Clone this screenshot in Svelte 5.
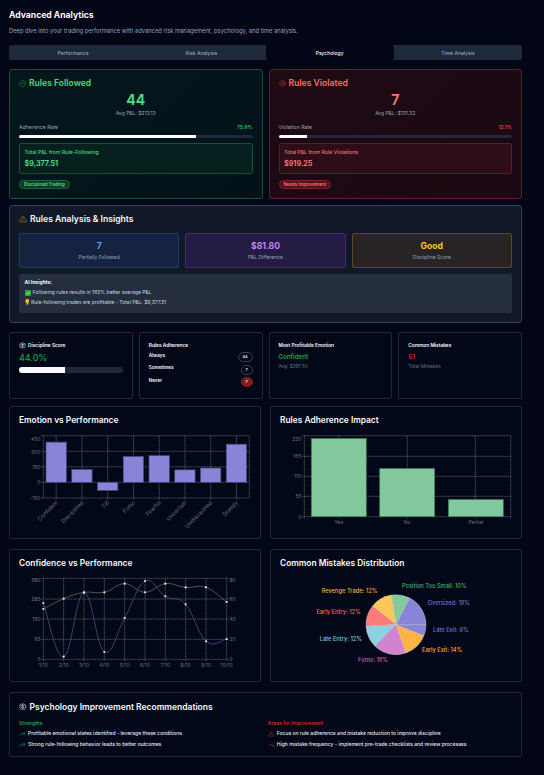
<script>
  const bars1 = [388, 125, -78, 250, 258, 120, 138, 368];
  const names1 = ['Confident','Disciplined','Tilt','Fomo','Fearful','Uncertain','Undisciplined','Greedy'];
  const x0 = 43.3, x1 = 249.3, y450 = 435.7, y0 = 482.3;
  const step1 = (x1 - x0) / 8;
  const scale1 = (y0 - y450) / 450;
  const gy1 = [435.7, 451.3, 466.8, 482.3, 498];

  const gridY2 = [435.7, 456.3, 476.3, 496.3, 516.7];
  const labels2 = ['220', '165', '110', '55', '0'];
  const bars2 = [
    { name: 'Yes', x: 311.3, y: 438.5 },
    { name: 'No', x: 379.7, y: 468.5 },
    { name: 'Partial', x: 448.3, y: 499.5 }
  ];

  const toPts = (arr) => arr.map(([x, y]) => [x / 3, 545 + y / 3]);
  const purple = toPts([[130,174],[191,335],[252,143],[313,321],[374,219],[435,108],[496,154],[557,178],[618,289],[680,282]]);
  const green = toPts([[130,192],[191,161],[252,142],[313,142],[374,116],[435,142],[496,116],[557,127],[618,127],[680,171]]);
  function smooth(p, t = 0.4) {
    let d = `M${p[0][0]} ${p[0][1]}`;
    for (let i = 0; i < p.length - 1; i++) {
      const a = p[i - 1] || p[i], b = p[i], c = p[i + 1], e = p[i + 2] || c;
      const c1 = [b[0] + (c[0] - a[0]) * t / 2, b[1] + (c[1] - a[1]) * t / 2];
      const c2 = [c[0] - (e[0] - b[0]) * t / 2, c[1] - (e[1] - b[1]) * t / 2];
      d += `C${c1[0]} ${c1[1]} ${c2[0]} ${c2[1]} ${c[0]} ${c[1]}`;
    }
    return d;
  }
  const gx3 = [130,191,252,313,374,435,496,557,618,680].map(v => v / 3);
  const gy3 = [100,162,222,283,343].map(v => 545 + v / 3);
  const dates = ['1/10','2/10','3/10','4/10','5/10','6/10','7/10','8/10','9/10','10/10'];

  const pieData = [
    { v: 9, c: '#8884d8' }, { v: 5, c: '#82ca9d' }, { v: 6, c: '#ffc658' }, { v: 6, c: '#ff7c7c' },
    { v: 6, c: '#8dd1e1' }, { v: 9, c: '#d084d0' }, { v: 7, c: '#ffb347' }, { v: 3, c: '#8884d8' }
  ];
  const cx = 396, cy = 624.7, r = 30;
  let acc = 0;
  const slices = pieData.map((s) => {
    const a0 = acc / 51 * Math.PI * 2; acc += s.v;
    const a1 = acc / 51 * Math.PI * 2;
    const large = a1 - a0 > Math.PI ? 1 : 0;
    return { c: s.c, d: `M${cx} ${cy}L${cx + r * Math.cos(a0)} ${cy - r * Math.sin(a0)}A${r} ${r} 0 ${large} 0 ${cx + r * Math.cos(a1)} ${cy - r * Math.sin(a1)}Z` };
  });
  const pieLabels = [
    { t: 'Position Too Small: 10%', x: 402, y: 587.5, c: '#4caf73', a: 'start' },
    { t: 'Oversized: 18%', x: 427.7, y: 604.5, c: '#7370d0', a: 'start' },
    { t: 'Late Exit: 6%', x: 433, y: 631.5, c: '#7370d0', a: 'start' },
    { t: 'Early Exit: 14%', x: 422, y: 651.5, c: '#ffa62e', a: 'start' },
    { t: 'Fomo: 18%', x: 388, y: 661.5, c: '#c065c0', a: 'end' },
    { t: 'Late Entry: 12%', x: 362, y: 641, c: '#7cc8da', a: 'end' },
    { t: 'Early Entry: 12%', x: 360.7, y: 613.5, c: '#ff6060', a: 'end' },
    { t: 'Revenge Trade: 12%', x: 377.3, y: 592.5, c: '#f5a93c', a: 'end' }
  ];
</script>

{#snippet brain()}
  <svg class="ic" viewBox="0 0 24 24" fill="none" stroke="currentColor" stroke-width="3" stroke-linecap="round" stroke-linejoin="round">
    <path d="M12 5a3 3 0 0 0-5.9-.1A4 4 0 0 0 3.6 11a4 4 0 0 0 .6 6.5A4 4 0 0 0 12 18Z" />
    <path d="M12 5a3 3 0 0 1 5.9-.1 4 4 0 0 1 2.5 6.1 4 4 0 0 1-.6 6.5A4 4 0 0 1 12 18Z" />
    <path d="M8 9h1M15 9h1M8 14h1M15 14h1" />
  </svg>
{/snippet}
{#snippet trendUp()}
  <svg class="ic li" viewBox="0 0 24 24" fill="none" stroke="currentColor" stroke-width="2.4" stroke-linecap="round" stroke-linejoin="round">
    <path d="M22 7l-8.5 8.5-5-5L2 17" /><path d="M16 7h6v6" />
  </svg>
{/snippet}
{#snippet trendDown()}
  <svg class="ic li" viewBox="0 0 24 24" fill="none" stroke="currentColor" stroke-width="2.4" stroke-linecap="round" stroke-linejoin="round">
    <path d="M22 17l-8.5-8.5-5 5L2 7" /><path d="M16 17h6v-6" />
  </svg>
{/snippet}
{#snippet alert(cls)}
  <svg class="ic {cls}" viewBox="0 0 24 24" fill="none" stroke="currentColor" stroke-width="2" stroke-linecap="round" stroke-linejoin="round">
    <path d="M21.7 18l-8-14a2 2 0 0 0-3.5 0l-8 14A2 2 0 0 0 4 21h16a2 2 0 0 0 1.7-3Z" /><path d="M12 9v4M12 17h.01" />
  </svg>
{/snippet}

<main class="page">
  <header class="head">
    <h1>Advanced Analytics</h1>
    <p>Deep dive into your trading performance with advanced risk management, psychology, and time analysis.</p>
  </header>

  <nav class="tabs">
    <span>Performance</span><span>Risk Analysis</span><span class="active">Psychology</span><span>Time Analysis</span>
  </nav>

  <section class="two">
    <article class="rule good">
      <h2>
        <svg class="ic t" viewBox="0 0 24 24" fill="none" stroke="currentColor" stroke-width="2" stroke-linecap="round" stroke-linejoin="round"><path d="M21.8 10A10 10 0 1 1 17 3.3" /><path d="M9 11l3 3L22 4" /></svg>
        Rules Followed
      </h2>
      <div class="big">44</div>
      <div class="avg">Avg P&amp;L: $213.13</div>
      <div class="rate"><span>Adherence Rate</span><b>75.9%</b></div>
      <div class="bar"><i style="width:75.9%"></i></div>
      <div class="sub">
        <div class="sl">Total P&amp;L from Rule-Following</div>
        <div class="sv">$9,377.51</div>
      </div>
      <span class="badge">Disciplined Trading</span>
    </article>
    <article class="rule bad">
      <h2>
        <svg class="ic t" viewBox="0 0 24 24" fill="none" stroke="currentColor" stroke-width="2" stroke-linecap="round"><circle cx="12" cy="12" r="10" /><circle cx="12" cy="12" r="3.6" /></svg>
        Rules Violated
      </h2>
      <div class="big">7</div>
      <div class="avg">Avg P&amp;L: $131.32</div>
      <div class="rate"><span>Violation Rate</span><b>12.1%</b></div>
      <div class="bar"><i style="width:12.1%"></i></div>
      <div class="sub">
        <div class="sl">Total P&amp;L from Rule Violations</div>
        <div class="sv">$919.25</div>
      </div>
      <span class="badge">Needs Improvement</span>
    </article>
  </section>

  <section class="insight">
    <h2>{@render alert('warn')} Rules Analysis &amp; Insights</h2>
    <div class="three">
      <div class="tile blue"><b>7</b><span>Partially Followed</span></div>
      <div class="tile purple"><b>$81.80</b><span>P&amp;L Difference</span></div>
      <div class="tile amber"><b>Good</b><span>Discipline Score</span></div>
    </div>
    <div class="ai">
      <h3>AI Insights:</h3>
      <p>
        <svg class="emoji" viewBox="0 0 12 12"><rect width="12" height="12" rx="1.5" fill="#22a83a" /><path d="M3 6.2l2.2 2.3L9 3.8" fill="none" stroke="#fff" stroke-width="1.6" /></svg>
        Following rules results in 162% better average P&amp;L
      </p>
      <p>
        <svg class="emoji bulb" viewBox="0 0 9 12"><circle cx="4.5" cy="4" r="4" fill="#fcc21b" /><rect x="2.7" y="7.5" width="3.6" height="4" rx=".8" fill="#b0a58a" /></svg>
        Rule-following trades are profitable - Total P&amp;L: $9,377.51
      </p>
    </div>
  </section>

  <section class="stats">
    <article class="stat">
      <h4><span class="brain">{@render brain()}</span>Discipline Score</h4>
      <div class="score">44.0%</div>
      <div class="sbar"><i style="width:44%"></i></div>
    </article>
    <article class="stat">
      <h4>Rules Adherence</h4>
      <div class="adh first"><span>Always</span><em class="wide">44</em></div>
      <div class="adh"><span>Sometimes</span><em>7</em></div>
      <div class="adh"><span>Never</span><em class="red">7</em></div>
    </article>
    <article class="stat">
      <h4>Most Profitable Emotion</h4>
      <div class="val gr">Confident</div>
      <div class="note">Avg: $391.50</div>
    </article>
    <article class="stat">
      <h4>Common Mistakes</h4>
      <div class="val rd">51</div>
      <div class="note">Total Mistakes</div>
    </article>
  </section>

  <section class="charts">
    <article class="chart">
      <h3>Emotion vs Performance</h3>
      <svg viewBox="10 428 250 105">
        {#each gy1 as y}<line class="g" x1={x0 - 2} x2={x1} y1={y} y2={y} />{/each}
        <line class="g" x1={x0} x2={x0} y1={435.7} y2={498} />
        <line class="g" x1={x1} x2={x1} y1={435.7} y2={498} />
        {#each bars1 as _, i}<line class="g" x1={x0 + (i + .5) * step1} x2={x0 + (i + .5) * step1} y1={435.7} y2={500} />{/each}
        {#each bars1 as v, i}
          <rect class="b1" x={x0 + i * step1 + 2.7} width={step1 - 5.4} y={v > 0 ? y0 - v * scale1 : y0} height={Math.abs(v) * scale1} />
          <text class="xr" transform="translate({x0 + (i + .5) * step1 + 2} 503) rotate(-45)">{names1[i]}</text>
        {/each}
        {#each [['450', 440.5], ['300', 453.5], ['150', 468.5], ['0', 484], ['-150', 499.5]] as [t, y]}<text class="yl" x="40.5" {y}>{t}</text>{/each}
      </svg>
    </article>
    <article class="chart">
      <h3>Rules Adherence Impact</h3>
      <svg viewBox="271 428 250 105">
        {#each gridY2 as y}<line class="g" x1="302.3" x2="510.7" y1={y} y2={y} />{/each}
        {#each [304.3, 339, 407.3, 475.3, 510.7] as x}<line class="g" x1={x} x2={x} y1="435.7" y2="518.5" />{/each}
        {#each bars2 as b}
          <rect class="b2" x={b.x} width="55" y={b.y} height={516.7 - b.y} />
          <text class="xc" x={b.x + 27.5} y="524">{b.name}</text>
        {/each}
        {#each labels2 as t, i}<text class="yl" x="301.5" y={gridY2[i] + (i ? 2 : 5)}>{t}</text>{/each}
      </svg>
    </article>
    <article class="chart">
      <h3>Confidence vs Performance</h3>
      <svg viewBox="10 571 250 105">
        {#each gy3 as y}<line class="g" x1="41.3" x2="228.7" y1={y} y2={y} />{/each}
        {#each gx3 as x}<line class="g" x1={x} x2={x} y1="578.3" y2="661" />{/each}
        <path class="lg" d={smooth(green)} />
        <path class="lp" d={smooth(purple)} />
        {#each green as [x, y]}<circle cx={x} cy={y} r="1.1" class="dg" />{/each}
        {#each purple as [x, y]}<circle cx={x} cy={y} r="1.1" class="dp" />{/each}
        {#each ['380','285','190','95','0'] as t, i}<text class="yl" x="40.5" y={gy3[i] + (i ? 2 : 4)}>{t}</text>{/each}
        {#each ['80','60','40','20','0'] as t, i}<text class="yl st" x="229.5" y={gy3[i] + (i ? 2 : 4)}>{t}</text>{/each}
        {#each dates as t, i}<text class="xc" x={gx3[i]} y="666.5">{t}</text>{/each}
      </svg>
    </article>
    <article class="chart">
      <h3>Common Mistakes Distribution</h3>
      <svg viewBox="271 571 250 105">
        {#each slices as s}<path d={s.d} fill={s.c} class="sl2" />{/each}
        {#each pieLabels as l}<text class="pl" x={l.x} y={l.y} fill={l.c} text-anchor={l.a}>{l.t}</text>{/each}
      </svg>
    </article>
  </section>

  <section class="recs">
    <h2><span class="brain">{@render brain()}</span> Psychology Improvement Recommendations</h2>
    <div class="rgrid">
      <div class="col up">
        <h5>Strengths</h5>
        <p>{@render trendUp()} Profitable emotional states identified - leverage these conditions</p>
        <p>{@render trendUp()} Strong rule-following behavior leads to better outcomes</p>
      </div>
      <div class="col down">
        <h5>Areas for Improvement</h5>
        <p>{@render alert('li')} Focus on rule adherence and mistake reduction to improve discipline</p>
        <p>{@render trendDown()} High mistake frequency - implement pre-trade checklists and review processes</p>
      </div>
    </div>
  </section>
</main>

<style>
  :global(body) { margin: 0; background: #020617; }
  .page { box-sizing: border-box; width: 544px; height: 775px; padding: 9px 22px 0 9px; font-family: Inter, "Liberation Sans", sans-serif; color: #f8fafc; background: #020617; overflow: hidden; }
  h1, h2, h3, h4, h5, p { margin: 0; }
  .ic { display: inline-block; flex: none; }

  .head { height: 36px; }
  .head h1 { font-size: 8.6px; line-height: 12px; font-weight: 700; }
  .head p { margin-top: 6px; font-size: 5.8px; line-height: 8px; color: #94a3b8; }

  .tabs { display: grid; grid-template-columns: repeat(4, 1fr); height: 15px; background: #1e293b; border-radius: 2px; }
  .tabs span { display: flex; align-items: center; justify-content: center; font-size: 5px; font-weight: 500; color: #94a3b8; }
  .tabs .active { background: #020617; color: #f8fafc; border-radius: 2px; }

  .two { display: grid; grid-template-columns: 1fr 1fr; gap: 6px; margin-top: 9px; height: 130px; }
  .rule { box-sizing: border-box; border: 1px solid; border-radius: 3px; padding: 7px 9px; }
  .good { background: linear-gradient(135deg, #04171c, #03121a); border-color: #14532d; --c: #4ade80; --s: #22c55e; }
  .bad { background: linear-gradient(135deg, #1f0a14, #1a0912); border-color: #6b1a2a; --c: #f87171; --s: #ef4444; }
  .rule h2 { display: flex; align-items: center; gap: 3px; height: 12px; font-size: 8.6px; font-weight: 600; color: var(--c); }
  .ic.t { width: 7px; height: 7px; margin-left: 0; color: var(--s); opacity: .75; }
  .big { margin-top: 2px; text-align: center; font-size: 14px; line-height: 18px; font-weight: 700; color: var(--c); }
  .avg { margin-top: 1px; text-align: center; font-size: 5px; line-height: 7px; color: #94a3b8; }
  .rate { display: flex; justify-content: space-between; margin-top: 7px; font-size: 5.2px; line-height: 7px; color: #94a3b8; }
  .rate b { color: var(--s); font-weight: 600; font-size: 5px; }
  .bar { height: 3px; margin-top: 4px; background: #1e293b; border-radius: 2px; overflow: hidden; }
  .bar i { display: block; height: 100%; background: #fff; }
  .sub { box-sizing: border-box; height: 31px; margin-top: 5px; padding: 4.5px; border: 1px solid; border-radius: 2px; }
  .good .sub { background: #05201f; border-color: #14532d; }
  .bad .sub { background: #2c0d18; border-color: #5f1a28; }
  .sl { font-size: 5.2px; line-height: 7px; font-weight: 500; color: var(--c); }
  .sv { margin-top: 2px; font-size: 7.2px; line-height: 11px; font-weight: 700; color: var(--c); }
  .badge { display: block; width: fit-content; box-sizing: border-box; margin-top: 6px; padding: 0 4px; height: 9px; line-height: 8px; border: .7px solid; border-radius: 5px; font-size: 4.4px; font-weight: 600; color: var(--c); }
  .good .badge { background: #0a3a27; border-color: #166534; }
  .bad .badge { background: #4c121e; border-color: #7f1d2d; }

  .insight { box-sizing: border-box; height: 118px; margin-top: 6px; padding: 6px 9px; background: #111827; border: 1px solid #334155; border-radius: 3px; }
  .insight h2 { display: flex; align-items: center; gap: 3px; height: 13px; font-size: 8.6px; font-weight: 600; }
  .ic.warn { width: 8px; height: 8px; color: #a17f1a; }
  .three { display: grid; grid-template-columns: repeat(3, 1fr); gap: 6px; margin-top: 8px; }
  .tile { box-sizing: border-box; height: 35px; display: flex; flex-direction: column; align-items: center; padding-top: 7px; border: 1px solid; border-radius: 2px; }
  .tile b { font-size: 8.6px; line-height: 11px; font-weight: 700; }
  .tile span { margin-top: 2px; font-size: 5px; line-height: 7px; color: #94a3b8; }
  .blue { background: #152240; border-color: #1e3a6e; } .blue b { color: #60a5fa; }
  .purple { background: #241b42; border-color: #46287a; } .purple b { color: #c084fc; }
  .amber { background: #282325; border-color: #5c4a1e; } .amber b { color: #facc15; }
  .ai { box-sizing: border-box; height: 39px; margin-top: 6px; padding: 5px 5.5px; background: #242e3e; border-radius: 2px; }
  .ai h3 { font-size: 5px; line-height: 7px; font-weight: 700; }
  .ai p { display: flex; align-items: center; gap: 2px; margin-top: 2.4px; height: 7px; font-size: 5px; line-height: 7px; color: #cbd5e1; }
  .ai h3 + p { margin-top: 3.4px; }
  .emoji { width: 6px; height: 6px; flex: none; }
  .emoji.bulb { width: 4.5px; }

  .stats { display: grid; grid-template-columns: repeat(4, 1fr); gap: 6px; margin-top: 9px; height: 65px; }
  .stat { box-sizing: border-box; padding: 9px; border: 1px solid #1e293b; border-radius: 2px; background: #020817; }
  .stat h4 { display: flex; align-items: center; gap: 2px; font-size: 4.8px; line-height: 7px; font-weight: 600; }
  .brain { display: inline-flex; color: #94a3b8; }
  .brain .ic { width: 7px; height: 7px; }
  .score { margin-top: 3px; font-size: 8.8px; line-height: 12px; font-weight: 500; color: #16a34a; }
  .sbar { height: 6px; margin-top: 3px; background: #1e293b; border-radius: 3px; overflow: hidden; }
  .sbar i { display: block; height: 100%; background: #f8fafc; }
  .adh { display: flex; justify-content: space-between; align-items: flex-start; height: 12.5px; font-size: 4.6px; font-weight: 600; }
  .adh.first { margin-top: 2.5px; }
  .adh span { line-height: 7px; }
  .adh em { box-sizing: border-box; font-style: normal; min-width: 12px; height: 10px; margin-top: .5px; line-height: 8.6px; text-align: center; border: .7px solid #334155; border-radius: 5px; font-size: 3.8px; }
  .adh em.wide { min-width: 15px; }
  .adh em.red { background: #7f1d1d; border-color: #7f1d1d; }
  .val { margin-top: 3px; font-size: 6.2px; line-height: 9px; font-weight: 600; }
  .gr { color: #16a34a; } .rd { color: #dc2626; }
  .note { margin-top: 2px; font-size: 4.8px; line-height: 7px; color: #64748b; }

  .charts { display: grid; grid-template-columns: 1fr 1fr; gap: 10px 9px; margin-top: 9px; }
  .chart { box-sizing: border-box; height: 133px; padding: 7px 0 0; border: 1px solid #1e293b; border-radius: 2px; background: #020817; overflow: hidden; }
  .chart h3 { height: 13px; padding-left: 9px; font-size: 8.4px; line-height: 13px; font-weight: 600; }
  .chart svg { display: block; width: 250px; height: 105px; margin-top: 1px; }
  .g { stroke: #8a8f98; stroke-width: .7; stroke-dasharray: 1 1; }
  .b1 { fill: #8884d8; stroke: #46467f; stroke-width: .7; }
  .b2 { fill: #82ca9d; stroke: #43705a; stroke-width: .7; }
  text { font-family: Inter, "Liberation Sans", sans-serif; }
  .yl { font-size: 5px; fill: #6b7280; text-anchor: end; }
  .st { text-anchor: start; }
  .xc { font-size: 5px; fill: #6b7280; text-anchor: middle; }
  .xr { font-size: 5.6px; fill: #6b7280; text-anchor: end; }
  .lg { fill: none; stroke: #47755b; stroke-width: .8; }
  .lp { fill: none; stroke: #4f4d8a; stroke-width: .8; }
  .dg { fill: #d7f5df; }
  .dp { fill: #e3e1ff; }
  .sl2 { stroke: #e5e7eb; stroke-width: .35; }
  .pl { font-size: 5.7px; font-weight: 500; }

  .recs { box-sizing: border-box; height: 65px; margin-top: 10px; padding: 7px 9px; border: 1px solid #1e293b; border-radius: 2px; background: #020817; }
  .recs h2 { display: flex; align-items: center; gap: 3px; height: 13px; font-size: 8.5px; font-weight: 600; }
  .recs .brain .ic { width: 7.5px; height: 7.5px; }
  .rgrid { display: grid; grid-template-columns: 1fr 1fr; gap: 4.5px; margin-top: 7px; }
  .col h5 { font-size: 5px; line-height: 7px; font-weight: 600; }
  .up h5 { color: #16a34a; } .down h5 { color: #dc2626; }
  .col p { display: flex; align-items: center; gap: 3px; margin-top: 4px; height: 7px; font-size: 5px; line-height: 7px; font-weight: 500; color: #e2e8f0; white-space: nowrap; }
  .col h5 + p { margin-top: 3px; }
  .ic.li { width: 6px; height: 6px; }
  .up .ic { color: #16a34a; } .down .ic { color: #b91c1c; }
</style>
